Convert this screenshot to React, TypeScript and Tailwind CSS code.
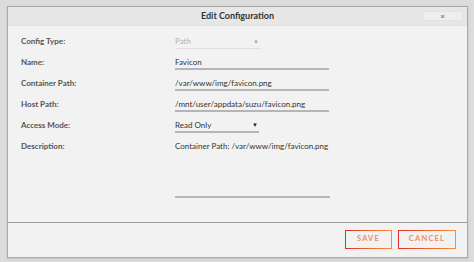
type Row = { label: string; value: string; kind: "select" | "input" | "readonly" };

const rows: Row[] = [
  { label: "Config Type:", value: "Path", kind: "readonly" },
  { label: "Name:", value: "Favicon", kind: "input" },
  { label: "Container Path:", value: "/var/www/img/favicon.png", kind: "input" },
  { label: "Host Path:", value: "/mnt/user/appdata/suzu/favicon.png", kind: "input" },
  { label: "Access Mode:", value: "Read Only", kind: "select" },
];

function Field({ row }: { row: Row }) {
  if (row.kind === "readonly") {
    return (
      <div className="mt-px flex h-[15px] w-[86px] items-center justify-between border-b border-[#dedede] text-[#b3b3b3]">
        <span>{row.value}</span>
        <span className="mr-[2px] text-[6px] text-[#aaa]">▼</span>
      </div>
    );
  }
  if (row.kind === "select") {
    return (
      <div className="mt-px flex h-[15px] w-[84px] items-center justify-between border-b-2 border-[#b5b5b5] text-[#333]">
        <span>{row.value}</span>
        <span className="mr-[1px] text-[6px] text-[#222]">▼</span>
      </div>
    );
  }
  return (
    <div className="mt-px flex h-[15px] w-[154px] items-center whitespace-nowrap border-b-2 border-[#b5b5b5] text-[#333]">
      {row.value}
    </div>
  );
}

export default function App() {
  return (
    <div className="h-[262px] w-[474px] bg-[#dcdcdc] px-[7px] pt-[6px]" style={{ fontFamily: 'Lato, "Open Sans", sans-serif' }}>
      <div className="flex h-[252px] w-[461px] flex-col border border-[#a9a9a9] bg-[#f2f2f2] shadow-sm">
        <div className="relative flex h-[19px] items-center justify-center border-b border-[#e0e0e0] bg-[#e7e7e7] text-[9px] font-bold text-[#333]">
          Edit Configuration
          <button className="absolute right-[4px] top-[4px] flex h-[10px] w-[41px] items-center justify-center border border-[#e2e2e2] bg-[#eeeeee] text-[8px] leading-none text-[#777]">
            ×
          </button>
        </div>

        <div className="flex-1 px-[13px] pt-[7px] text-[8px]">
          {rows.map((r) => (
            <div key={r.label} className="flex h-[21px]">
              <div className="w-[154px] pt-px font-bold leading-[15px] text-[#555]">{r.label}</div>
              <Field row={r} />
            </div>
          ))}
          <div className="flex">
            <div className="w-[154px] pt-px font-bold leading-[15px] text-[#555]">Description:</div>
            <div className="mt-px h-[59px] w-[155px] whitespace-nowrap border-b-2 border-[#b5b5b5] leading-[15px] text-[#333]">
              Container Path: /var/www/img/favicon.png
            </div>
          </div>
        </div>

        <div className="flex h-[35px] items-center justify-end gap-[6px] border-t border-[#9c9c9c] pb-[2px] pr-[11px]">
          <div className="bg-gradient-to-r from-[#e22828] to-[#ff8c2f] p-px">
            <button className="flex h-[17px] w-[45px] items-center justify-center bg-[#f2f2f2] text-[7.5px] font-bold tracking-[1.2px] text-[#ef8d60]">
              SAVE
            </button>
          </div>
          <div className="bg-gradient-to-r from-[#e22828] to-[#ff8c2f] p-px">
            <button className="flex h-[17px] w-[56px] items-center justify-center bg-[#f2f2f2] text-[7.5px] font-bold tracking-[1.2px] text-[#ef8d60]">
              CANCEL
            </button>
          </div>
        </div>
      </div>
    </div>
  );
}
